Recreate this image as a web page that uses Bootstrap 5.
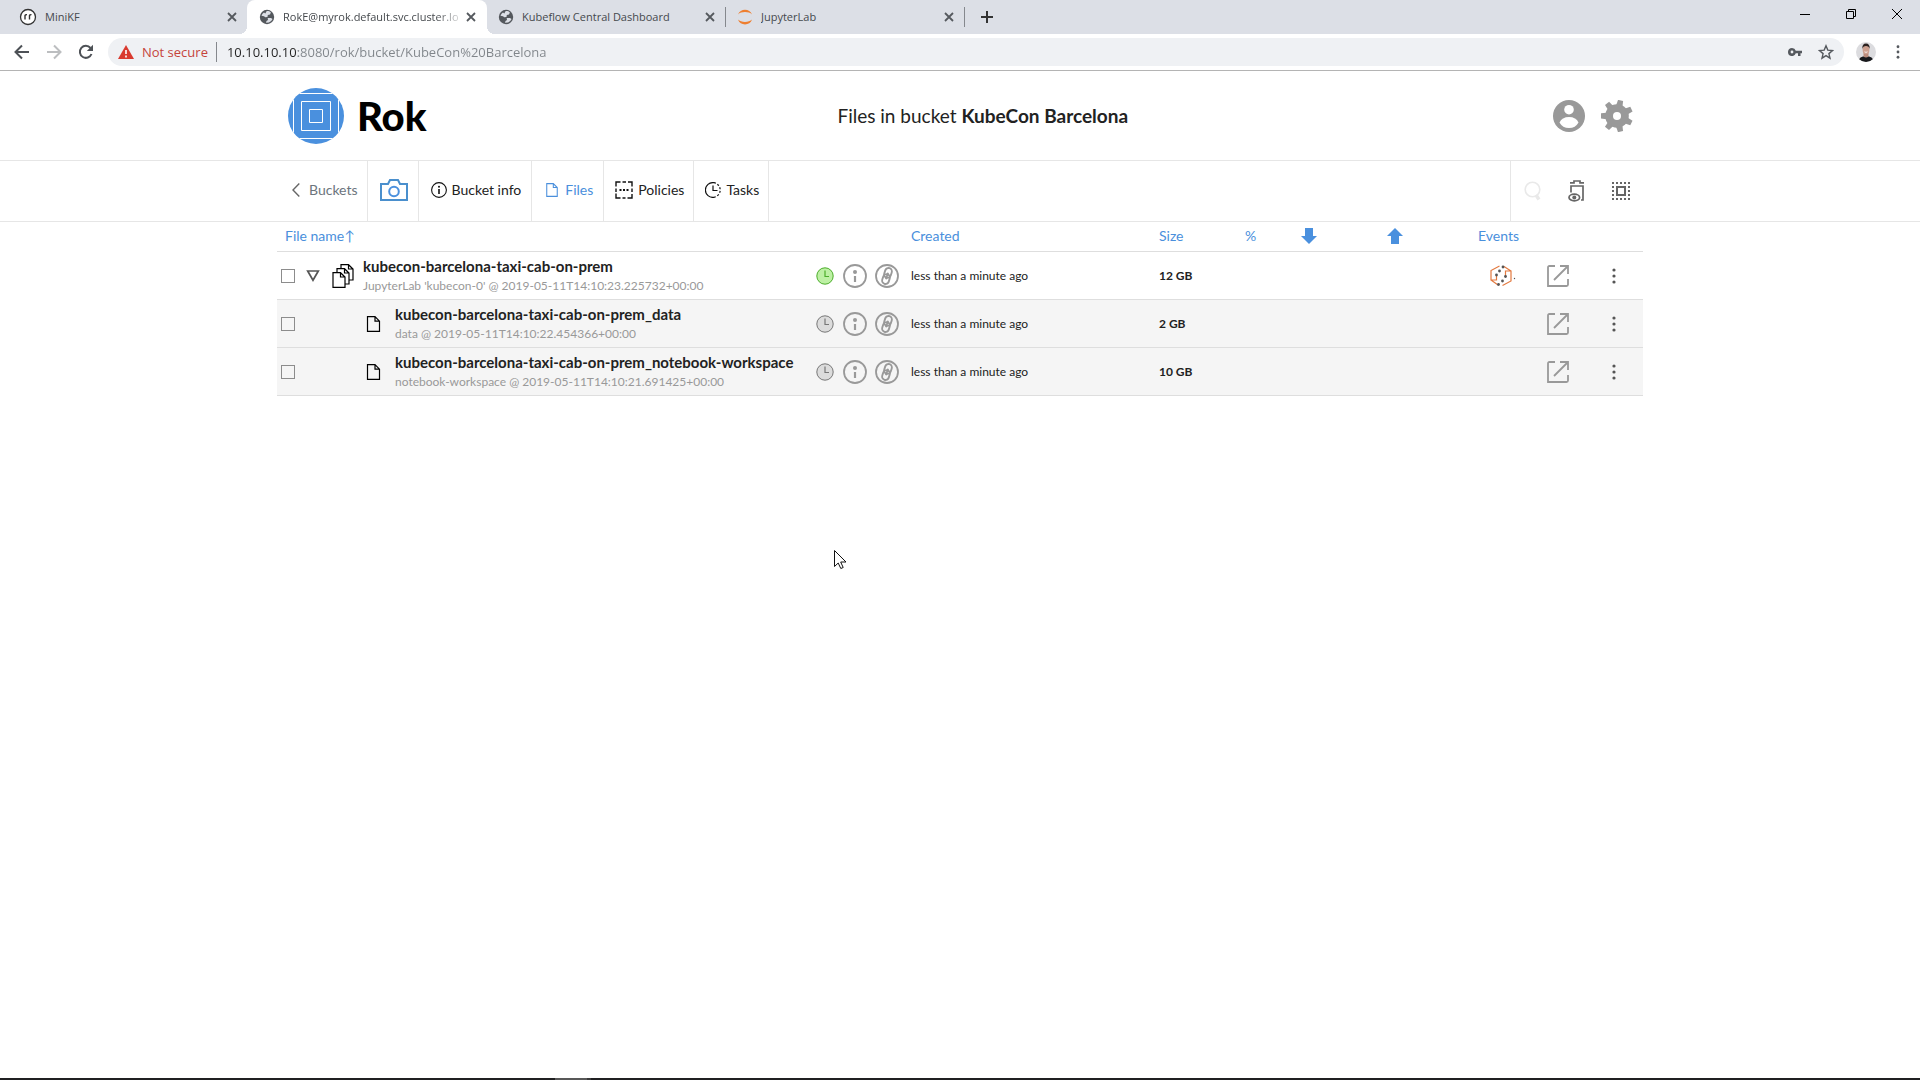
<!DOCTYPE html>
<html lang="en">
<head>
<meta charset="utf-8">
<meta name="viewport" content="width=device-width, initial-scale=1">
<title>Rok - Files</title>
<link rel="stylesheet" href="https://cdn.jsdelivr.net/npm/bootstrap@5.3.0/dist/css/bootstrap.min.css">
<style>
  body { font-family: Lato, sans-serif; font-size: 14px; line-height: 20px; color: #222; background: #fff; }
  svg { display: block; flex: none; }
  button { color: inherit; }
  .chrome { font-family: "Open Sans", "Noto Sans", sans-serif; }
  .plain { border: 0; background: none; padding: 0; display: flex; align-items: center; justify-content: center; }

  /* browser tabs */
  .tabstrip { height: 34px; background: #dcdfe6; padding-left: 7px; }
  .tab { position: relative; width: 238px; height: 34px; padding: 0 9px 0 11px; font-size: 11px; color: #45494d; }
  .tab-wide { width: 240px; padding-left: 12px; }
  .tab-title { white-space: nowrap; overflow: hidden; margin-left: 8px; flex: 1; color: inherit; text-decoration: none; }
  .tab-on { background: #fff; border-radius: 8px 8px 0 0; padding-right: 10px; }
  .tab-on .tab-title { -webkit-mask-image: linear-gradient(90deg, #000 84%, transparent); mask-image: linear-gradient(90deg, #000 84%, transparent); }
  .tab-on::before, .tab-on::after { content: ""; position: absolute; bottom: 0; width: 8px; height: 8px; }
  .tab-on::before { left: -8px; background: radial-gradient(circle at 0 0, transparent 8px, #fff 8px); }
  .tab-on::after { right: -8px; background: radial-gradient(circle at 100% 0, transparent 8px, #fff 8px); z-index: 1; }
  .tab-line { width: 1px; height: 20px; background: #85888d; }
  .tab-x { width: 12px; height: 12px; color: #55595e; }
  .winbtn { width: 46px; height: 28px; color: #000; }
  .new-tab { margin-left: 16px; }

  /* address bar */
  .toolbar { height: 37px; border-bottom: 1px solid #b4b4b4; padding: 4px 12px 4px 14px; color: #55595e; }
  .omnibox { height: 28px; border-radius: 14px; background: #eff1f4; padding: 0 10px; margin-left: 14px; font-size: 13px; }
  .warn { color: #c5443b; }
  .url-line { margin: 0 10px 0 8px; }
  .url { border: 0; outline: 0; padding: 0; height: 28px; background: linear-gradient(90deg, #222 71px, #80858a 71px); -webkit-background-clip: text; background-clip: text; color: transparent; font-size: 13px; }

  /* application */
  .app-width { width: 100%; max-width: 1366px; margin: 0 auto; }
  .brandbar { height: 89px; padding: 0 10px 0 11px; }
  .brand { font-size: 40px; line-height: 48px; font-weight: 900; color: #000; text-decoration: none; gap: 13px; }
  .bucket-title { font-size: 19px; line-height: 24px; font-weight: 400; padding-right: 14px; }
  .menubar { border-top: 1px solid #e6e6e6; border-bottom: 1px solid #e6e6e6; }
  .menu-item { height: 60px; border-right: 1px solid #e6e6e6; color: #222; text-decoration: none; padding: 0 9px 2px 11px; gap: 5px; white-space: nowrap; }
  .menu-item-wide { padding: 0 10px 2px 12px; }
  .menu-tools { border-left: 1px solid #e6e6e6; }
  .tool { width: 44px; height: 60px; color: #666; }
  .blue, .blue:hover { color: #4a8fdc; text-decoration: none; }

  .files { table-layout: fixed; width: 100%; border-collapse: collapse; }
  .files th { height: 29px; padding: 0 8px; font-weight: 400; border-bottom: 1px solid #dedede; }
  .files td { height: 48px; padding: 2px 8px 0; border-bottom: 1px solid #dedede; font-size: 12px; }
  .files .cell-name { padding: 2px 4px 0; }
  .child-row { background: #f5f5f5; }
  .form-check-input.tick[type=checkbox] { width: 14px; height: 14px; margin: 0; border-radius: 0; border: 1px solid #8c8c8c; background-color: transparent; }
  .kids { width: 14px; margin-left: 11px; color: #555; }
  .stack-icon { width: 22px; margin: 0 9px 0 12px; }
  .page-icon { margin: 0 14px 0 71px; }
  .file-text { margin-bottom: 2px; }
  .file-title { font-size: 15px; line-height: 22px; font-weight: 700; color: #222; text-decoration: none; white-space: nowrap; }
  .file-sub { font-size: 12px; line-height: 18px; color: #999; white-space: nowrap; }
  .row-tools { gap: 8px; }
  .row-clock { margin-right: 1px; }
  .grey { color: #999; }
  .c-created { width: 248px; } .c-size { width: 86px; } .c-pct { width: 29px; } .c-arrow { width: 86px; }
  .c-events { width: 89px; } .c-open { width: 62px; } .c-more { width: 54px; }
  .files td.cell-more { padding: 2px 4px 0 0; }
  .osbar { height: 2px; background: #202022; padding-left: 555px; }
  .osbar-app { width: 36px; height: 2px; background: #585858; border-right: 4px solid #3a3a3a; }
  .pointer { position: absolute; left: 834px; top: 550px; }
</style>
<script src="https://cdn.jsdelivr.net/npm/bootstrap@5.3.0/dist/js/bootstrap.bundle.min.js"></script>
</head>
<body class="d-flex flex-column min-vh-100">

<svg width="0" height="0" class="position-absolute" aria-hidden="true">
  <symbol id="i-x" viewBox="0 0 12 12"><path d="M2 2l8 8M10 2l-8 8" stroke="currentColor" stroke-width="1.8"/></symbol>
  <symbol id="i-globe" viewBox="0 0 16 16"><circle cx="8" cy="8" r="7.2" fill="#54585d"/><path d="M7.5 2.3c1.2-.5 3-.1 4.400 1.300L11 5.500 8.800 6 8.500 8l-2.300.2L5 7.200 2.500 6.800C2.900 5.600 3.600 4.400 5 3.400l1.300 1zM8.700 8.900l3.300.1 1.500 1c-.5 1.500-1.900 2.900-3.600 3.400L7 13.700 7.500 12 9 11z" fill="#dcdfe6"/></symbol>
  <symbol id="i-clock" viewBox="0 0 18 18"><circle cx="9" cy="9" r="8.200" stroke-width="1"/><path d="M9 3.500V9.500H13" fill="none" stroke-width="1.200"/></symbol>
  <symbol id="i-info" viewBox="0 0 24 24"><circle cx="12" cy="12" r="11" fill="none" stroke="currentColor" stroke-width="1.800"/><circle cx="12" cy="8" r="2" fill="currentColor"/><path d="M12 12v6" stroke="currentColor" stroke-width="2.200"/></symbol>
  <symbol id="i-link" viewBox="0 0 24 24"><g fill="none" stroke="currentColor"><circle cx="12" cy="12" r="11" stroke-width="1.800"/><g stroke-width="1.900" transform="rotate(18 12 12)"><rect x="8.600" y="3.800" width="6.800" height="10" rx="3.400"/><rect x="8.600" y="10.200" width="6.800" height="10" rx="3.400"/><path d="M12 8.500v7"/></g></g></symbol>
  <symbol id="i-open" viewBox="0 0 22 22"><g fill="none" stroke="currentColor" stroke-width="1.800"><path d="M8 1H2.500Q1 1 1 2.500V21H19.500Q21 21 21 19.500V14M7 15L20.500 1.500M13 1H21V9"/></g></symbol>
  <symbol id="i-dots" viewBox="0 0 4 16"><g fill="currentColor"><circle cx="2" cy="2" r="1.600"/><circle cx="2" cy="8" r="1.600"/><circle cx="2" cy="14" r="1.600"/></g></symbol>
  <symbol id="i-page" viewBox="0 0 14 16"><path d="M1 .7H8.500L13 5.200V15.300H1zM8.500 .7V5.200H13" fill="none" stroke="currentColor" stroke-width="1.200"/></symbol>
</svg>

<header class="chrome">
  <nav class="tabstrip d-flex" aria-label="Browser tabs">
    <div class="tab tab-wide d-flex align-items-center">
      <svg width="18" height="18" viewBox="0 0 18 18"><circle cx="9" cy="9" r="7.500" fill="#fff" stroke="#333" stroke-width="1.300"/><path d="M6 11.500V7.500q.2-1 2-.9M10.500 11.500V7.500q.2-1 2-.9" fill="none" stroke="#333" stroke-width="1.400"/></svg>
      <a href="#" class="tab-title">MiniKF</a>
      <button class="plain tab-x" aria-label="Close MiniKF"><svg width="12" height="12"><use href="#i-x"/></svg></button>
    </div>
    <div class="tab tab-wide tab-on d-flex align-items-center">
      <svg width="16" height="16"><use href="#i-globe"/></svg>
      <a href="#" class="tab-title">RokE@myrok.default.svc.cluster.lo</a>
      <button class="plain tab-x" aria-label="Close Rok"><svg width="12" height="12"><use href="#i-x"/></svg></button>
    </div>
    <div class="tab d-flex align-items-center">
      <svg width="16" height="16"><use href="#i-globe"/></svg>
      <a href="#" class="tab-title">Kubeflow Central Dashboard</a>
      <button class="plain tab-x" aria-label="Close Kubeflow"><svg width="12" height="12"><use href="#i-x"/></svg></button>
    </div>
    <span class="tab-line align-self-center"></span>
    <div class="tab d-flex align-items-center">
      <svg width="16" height="16" viewBox="0 0 16 16"><path d="M1 5.500C3-1 13-1 15 5.500 12 2.300 4 2.300 1 5.500zM1 10.500C3 17 13 17 15 10.500 12 13.700 4 13.700 1 10.500z" fill="#ee7f30"/></svg>
      <a href="#" class="tab-title">JupyterLab</a>
      <button class="plain tab-x" aria-label="Close JupyterLab"><svg width="12" height="12"><use href="#i-x"/></svg></button>
    </div>
    <span class="tab-line align-self-center"></span>
    <button class="plain new-tab" aria-label="New tab"><svg width="12" height="12" viewBox="0 0 12 12"><path d="M6 0v12M0 6h12" stroke="#333" stroke-width="2"/></svg></button>
    <div class="d-flex ms-auto">
      <button class="plain winbtn" aria-label="Minimize"><svg width="10" height="10" viewBox="0 0 10 10"><path d="M0 5.500h10" stroke="#000"/></svg></button>
      <button class="plain winbtn" aria-label="Restore"><svg width="10" height="10" viewBox="0 0 10 10"><path d="M.5 2.500h7v7h-7zM2.500 2.500v-2h7v7h-2" fill="none" stroke="#000"/></svg></button>
      <button class="plain winbtn" aria-label="Close window"><svg width="10" height="10" viewBox="0 0 10 10"><path d="M0 0l10 10M10 0L0 10" stroke="#000"/></svg></button>
    </div>
  </nav>
  <div class="toolbar d-flex align-items-center">
    <button class="plain" aria-label="Back"><svg width="16" height="16" viewBox="0 0 16 16"><path d="M15 8H2M8 1.500L1.500 8 8 14.500" fill="none" stroke="#4d5156" stroke-width="2"/></svg></button>
    <button class="plain ms-3" aria-label="Forward"><svg width="16" height="16" viewBox="0 0 16 16"><path d="M1 8h13M8 1.500L14.500 8 8 14.500" fill="none" stroke="#bcbec0" stroke-width="2"/></svg></button>
    <button class="plain ms-3" aria-label="Reload"><svg width="16" height="16" viewBox="0 0 16 16"><path d="M13.500 10A6 6 0 1 1 12.500 4" fill="none" stroke="#4d5156" stroke-width="2"/><path d="M15 .8V7H8.800z" fill="#4d5156"/></svg></button>
    <div class="omnibox d-flex align-items-center flex-grow-1">
      <svg width="16" height="14" viewBox="0 0 16 14"><path d="M8 0l8 14H0z" fill="#d93a2f"/><path d="M8 5v4M8 10.500v2" stroke="#fff" stroke-width="1.600"/></svg>
      <span class="warn ms-2">Not secure</span>
      <span class="tab-line url-line"></span>
      <input class="url flex-grow-1" type="text" aria-label="Address" value="10.10.10.10:8080/rok/bucket/KubeCon%20Barcelona">
      <button class="plain" aria-label="Passwords"><svg width="14" height="8" viewBox="0 0 14 8"><path d="M4 0a4 4 0 1 0 3.800 5.300H10V8h2.500V5.300H14V2.700H7.800A4 4 0 0 0 4 0zm0 2.600a1.400 1.400 0 1 1 0 2.800 1.400 1.400 0 0 1 0-2.800z" fill="#55595e"/></svg></button>
      <button class="plain ms-3" aria-label="Bookmark"><svg width="16" height="16" viewBox="0 0 16 16"><path d="M8 1.800l1.800 4.300 4.700.4-3.600 3.100 1.100 4.600L8 11.700l-4 2.500 1.100-4.600L1.500 6.500l4.700-.4z" fill="none" stroke="#55595e" stroke-width="1.400"/></svg></button>
    </div>
    <button class="plain ms-2 me-2 px-1" aria-label="Profile"><svg width="20" height="20" viewBox="0 0 20 20"><clipPath id="face"><circle cx="10" cy="10" r="10"/></clipPath><g clip-path="url(#face)"><path d="M0 0h20v20H0z" fill="#dcdcdf"/><path d="M2 20q1-6 8-6t8 6z" fill="#17181b"/><path d="M7.500 10h5v4.500q-2.500 2-5 0z" fill="#b98a7a"/><ellipse cx="10" cy="7.500" rx="3.400" ry="4.700" fill="#cda08f"/><path d="M6.300 7Q6 1.500 10 1.500T13.700 7Q13 4 10 4T6.300 7z" fill="#2c2220"/><path d="M8.500 9.800q1.500 1.200 3 0" stroke="#fff" stroke-width=".8" fill="none"/></g></svg></button>
    <button class="plain px-2" aria-label="Menu"><svg width="4" height="14"><use href="#i-dots"/></svg></button>
  </div>
</header>

<main>
  <div class="app-width brandbar d-flex align-items-center">
    <a href="#" class="brand d-flex align-items-center">
      <svg width="56" height="56" viewBox="0 0 56 56"><clipPath id="disc"><circle cx="28" cy="28" r="28"/></clipPath><g clip-path="url(#disc)"><path d="M0 0h56v56H0z" fill="#4a90de"/><path d="M5.500 5.500h45v45h-45zM13.500 13.500h29v29h-29zM21.500 21.500h13v13h-13z" fill="none" stroke="#fff"/></g></svg>
      Rok
    </a>
    <h1 class="bucket-title flex-grow-1 text-center m-0">Files in bucket <b>KubeCon Barcelona</b></h1>
    <div class="d-flex gap-3">
      <button class="plain" aria-label="Account"><svg width="32" height="32" viewBox="0 0 32 32"><circle cx="16" cy="16" r="16" fill="#999"/><circle cx="16" cy="9.700" r="4.800" fill="#fff"/><path d="M6.500 22.500Q9 17 16 17T25.500 22.500Q22.500 28 16 28T6.500 22.500z" fill="#fff"/></svg></button>
      <button class="plain" aria-label="Settings"><svg width="32" height="32" viewBox="0 0 32 32"><g fill="#999"><circle cx="16" cy="16" r="11.800"/><path id="tooth" d="M12.800 5.500L13.400 0h5.200l.6 5.500z" transform="rotate(13 16 16)"/><use href="#tooth" transform="rotate(51.400 16 16)"/><use href="#tooth" transform="rotate(102.900 16 16)"/><use href="#tooth" transform="rotate(154.300 16 16)"/><use href="#tooth" transform="rotate(205.700 16 16)"/><use href="#tooth" transform="rotate(257.100 16 16)"/><use href="#tooth" transform="rotate(308.600 16 16)"/></g><circle cx="16" cy="16" r="4" fill="#fff"/></svg></button>
    </div>
  </div>

  <div class="menubar">
    <nav class="app-width d-flex">
      <a href="#" class="menu-item d-flex align-items-center text-secondary"><svg width="8" height="14" viewBox="0 0 8 14" class="ms-1 me-1"><path d="M7.300.5L1 7l6.300 6.500" fill="none" stroke="#666" stroke-width="1.400"/></svg>Buckets</a>
      <a href="#" class="menu-item menu-item-wide d-flex align-items-center" aria-label="Snapshot"><svg width="28" height="22" viewBox="0 0 28 22"><path d="M1 5H8L10 1H18L20 5H27V21H1z" fill="none" stroke="#4a8fcd" stroke-width="2"/><circle cx="14" cy="12.500" r="4.800" fill="none" stroke="#4a90de" stroke-width="2"/></svg></a>
      <a href="#" class="menu-item menu-item-wide d-flex align-items-center"><svg width="16" height="16" viewBox="0 0 16 16"><circle cx="8" cy="8" r="7.400" fill="none" stroke="#111" stroke-width="1.100"/><circle cx="8" cy="4.800" r="1" fill="#111"/><path d="M8 7v5" stroke="#111" stroke-width="1.600"/></svg>Bucket info</a>
      <a href="#" class="menu-item menu-item-wide blue d-flex align-items-center"><svg width="16" height="14"><use href="#i-page"/></svg>Files</a>
      <a href="#" class="menu-item d-flex align-items-center"><svg width="18" height="18" viewBox="0 0 18 18"><path d="M1 5.500V1h4.500M7.500 1H11M13 1h4v4.500M17 7.500V11M17 13v4h-4.500M5.500 17H1v-4.500M7.500 17h3M1 7.500V11" fill="none" stroke="#111" stroke-width="1.400"/><path d="M4.500 9h2M8 9h2M11.500 9h2" stroke="#111" stroke-width="1.800"/></svg>Policies</a>
      <a href="#" class="menu-item d-flex align-items-center"><svg width="16" height="16" viewBox="0 0 16 16"><path d="M9 15.300A7.400 7.400 0 1 1 9 .7" fill="none" stroke="#111" stroke-width="1.200"/><path d="M9 .7A7.400 7.400 0 0 1 9 15.300" fill="none" stroke="#111" stroke-width="1.200" stroke-dasharray="2 1.700"/><path d="M8 3.500V8.500h4.500" fill="none" stroke="#111" stroke-width="1.200"/></svg>Tasks</a>
      <div class="menu-tools d-flex ms-auto">
        <button class="plain tool" aria-label="Search"><svg width="18" height="20" viewBox="0 0 18 20"><circle cx="8.500" cy="8.500" r="7.300" fill="none" stroke="#e9e9e9" stroke-width="1.600"/><path d="M12 14l3 4.500" stroke="#e9e9e9" stroke-width="3.500"/></svg></button>
        <button class="plain tool" aria-label="Show deleted"><svg width="18" height="22" viewBox="0 0 18 22"><g fill="none" stroke="#666" stroke-width="1.700"><path d="M2 2.800h4V1h6v1.800h4M3 12.500V6h12v14h-2"/><ellipse cx="6.300" cy="17.500" rx="5.300" ry="3.300"/></g><circle cx="6.300" cy="17.500" r="2" fill="#666"/></svg></button>
        <button class="plain tool" aria-label="Select all"><svg width="18" height="18" viewBox="0 0 18 18"><path d="M0 1h18M0 17h18" stroke="#666" stroke-width="2" stroke-dasharray="2 2"/><path d="M1 4v12M17 4v12" stroke="#666" stroke-width="2" stroke-dasharray="2 2"/><path d="M5 5h8v8H5z" fill="none" stroke="#666" stroke-width="2"/></svg></button>
      </div>
    </nav>
  </div>

  <div class="app-width">
    <table class="files">
      <colgroup><col><col class="c-created"><col class="c-size"><col class="c-pct"><col class="c-arrow"><col class="c-arrow"><col class="c-events"><col class="c-open"><col class="c-more"></colgroup>
      <thead>
        <tr>
          <th><a href="#" class="blue">File name↑</a></th>
          <th><a href="#" class="blue">Created</a></th>
          <th><a href="#" class="blue">Size</a></th>
          <th><a href="#" class="blue">%</a></th>
          <th><svg class="mx-auto" width="16" height="16" viewBox="0 0 16 16" role="img" aria-label="Download"><path d="M4 0h8v8h4l-8 8-8-8h4z" fill="#4a90de"/></svg></th>
          <th><svg class="mx-auto" width="16" height="16" viewBox="0 0 16 16" role="img" aria-label="Upload"><path d="M4 16h8V8h4L8 0 0 8h4z" fill="#4a90de"/></svg></th>
          <th class="text-end"><a href="#" class="blue">Events</a></th>
          <th></th><th></th>
        </tr>
      </thead>
      <tbody>
        <tr>
          <td class="cell-name"><div class="d-flex align-items-center">
            <input type="checkbox" class="form-check-input tick" aria-label="Select kubecon-barcelona-taxi-cab-on-prem">
            <button class="plain kids" aria-label="Collapse"><svg width="14" height="12" viewBox="0 0 14 12"><path d="M1.700 1H12.300L7 10.200z" fill="none" stroke="#555" stroke-width="1.700"/></svg></button>
            <svg class="stack-icon" width="22" height="24" viewBox="0 0 22 24"><g fill="#fff" stroke="#000" stroke-width="1.200"><path d="M9 .7h7.500L21 5v11H9zM16.500.7V5H21"/><path d="M5 4.700h7.500L17 9v11H5zM12.500 4.700V9H17"/><path d="M1 8.700h7.500L13 13v10.300H1zM8.500 8.700V13H13"/></g></svg>
            <div class="file-text"><a href="#" class="file-title d-block">kubecon-barcelona-taxi-cab-on-prem</a><div class="file-sub">JupyterLab 'kubecon-0' @ 2019-05-11T14:10:23.225732+00:00</div></div>
            <div class="d-flex row-tools align-items-center ms-auto grey"><svg class="row-clock" width="18" height="18" fill="#bdf0a4" stroke="#4cae2b"><use href="#i-clock"/></svg><button class="plain" aria-label="Details"><svg width="24" height="24"><use href="#i-info"/></svg></button><button class="plain" aria-label="Copy link"><svg width="24" height="24"><use href="#i-link"/></svg></button></div>
          </div></td>
          <td>less than a minute ago</td><td><b>12 GB</b></td><td></td><td></td><td></td>
          <td><svg class="ms-auto" width="29" height="22" viewBox="0 0 29 22"><path d="M9.500 1L1 5.500V15H6.500V10M1 15l7 5M12.500 20.500L21 16V6H15.500V11M21 6l-7-4.500" fill="none" stroke="#e3793f" stroke-width="1.200"/><g fill="#555"><circle cx="13" cy="2" r="1.400"/><circle cx="9.500" cy="6" r="1.400"/><circle cx="6.500" cy="10" r="1.400"/><circle cx="15.500" cy="11.500" r="1.400"/><circle cx="12.500" cy="16" r="1.400"/><circle cx="8.500" cy="19.500" r="1.400"/><circle cx="24.500" cy="13.500" r=".7"/></g></svg></td>
          <td><button class="plain grey mx-auto" aria-label="Open"><svg width="22" height="22"><use href="#i-open"/></svg></button></td>
          <td class="cell-more"><button class="plain mx-auto" aria-label="More"><svg width="4" height="16" color="#555"><use href="#i-dots"/></svg></button></td>
        </tr>
        <tr class="child-row">
          <td class="cell-name"><div class="d-flex align-items-center">
            <input type="checkbox" class="form-check-input tick" aria-label="Select data">
            <svg class="page-icon" width="15" height="16" color="#000"><use href="#i-page"/></svg>
            <div class="file-text"><a href="#" class="file-title d-block">kubecon-barcelona-taxi-cab-on-prem_data</a><div class="file-sub">data @ 2019-05-11T14:10:22.454366+00:00</div></div>
            <div class="d-flex row-tools align-items-center ms-auto grey"><svg class="row-clock" width="18" height="18" fill="#dcdcdc" stroke="#777"><use href="#i-clock"/></svg><button class="plain" aria-label="Details"><svg width="24" height="24"><use href="#i-info"/></svg></button><button class="plain" aria-label="Copy link"><svg width="24" height="24"><use href="#i-link"/></svg></button></div>
          </div></td>
          <td>less than a minute ago</td><td><b>2 GB</b></td><td></td><td></td><td></td><td></td>
          <td><button class="plain grey mx-auto" aria-label="Open"><svg width="22" height="22"><use href="#i-open"/></svg></button></td>
          <td class="cell-more"><button class="plain mx-auto" aria-label="More"><svg width="4" height="16" color="#555"><use href="#i-dots"/></svg></button></td>
        </tr>
        <tr class="child-row">
          <td class="cell-name"><div class="d-flex align-items-center">
            <input type="checkbox" class="form-check-input tick" aria-label="Select notebook workspace">
            <svg class="page-icon" width="15" height="16" color="#000"><use href="#i-page"/></svg>
            <div class="file-text"><a href="#" class="file-title d-block">kubecon-barcelona-taxi-cab-on-prem_notebook-workspace</a><div class="file-sub">notebook-workspace @ 2019-05-11T14:10:21.691425+00:00</div></div>
            <div class="d-flex row-tools align-items-center ms-auto grey"><svg class="row-clock" width="18" height="18" fill="#dcdcdc" stroke="#777"><use href="#i-clock"/></svg><button class="plain" aria-label="Details"><svg width="24" height="24"><use href="#i-info"/></svg></button><button class="plain" aria-label="Copy link"><svg width="24" height="24"><use href="#i-link"/></svg></button></div>
          </div></td>
          <td>less than a minute ago</td><td><b>10 GB</b></td><td></td><td></td><td></td><td></td>
          <td><button class="plain grey mx-auto" aria-label="Open"><svg width="22" height="22"><use href="#i-open"/></svg></button></td>
          <td class="cell-more"><button class="plain mx-auto" aria-label="More"><svg width="4" height="16" color="#555"><use href="#i-dots"/></svg></button></td>
        </tr>
      </tbody>
    </table>
  </div>
</main>

<footer class="osbar mt-auto"><div class="osbar-app"></div></footer>
<svg class="pointer" width="13" height="20" viewBox="0 0 13 20"><path d="M.5.500V16.500L4.200 13 6.800 18.500 9.200 17.500 6.700 12H12z" fill="#fff" stroke="#111"/></svg>
</body>
</html>
